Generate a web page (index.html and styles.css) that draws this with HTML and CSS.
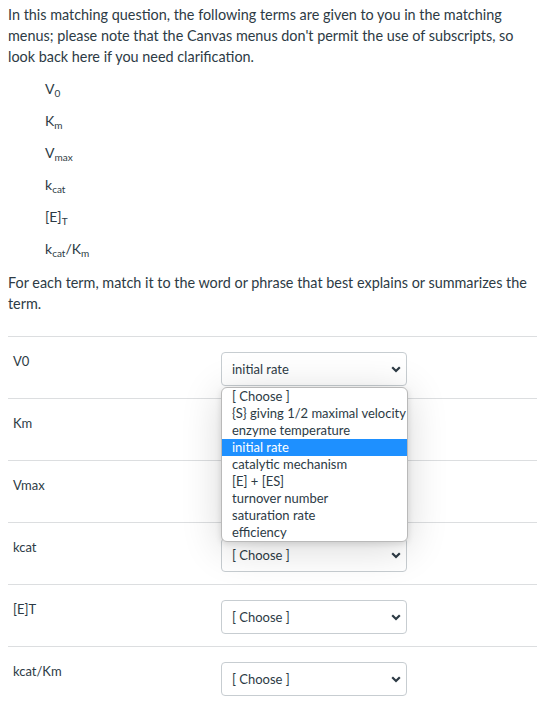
FILE: index.html
```html
<!DOCTYPE html>
<html lang="en">
<head>
<meta charset="utf-8">
<title>Matching question</title>
<link rel="stylesheet" href="styles.css">
</head>
<body>
<div class="page">
  <p class="intro">In this matching question, the following terms are given to you in the matching menus; please note that the Canvas menus don't permit the use of subscripts, so look back here if you need clarification.</p>
  <div class="terms">
    <p>V<sub>0</sub></p>
    <p>K<sub>m</sub></p>
    <p>V<sub>max</sub></p>
    <p>k<sub>cat</sub></p>
    <p>[E]<sub>T</sub></p>
    <p>k<sub>cat</sub>/K<sub>m</sub></p>
  </div>
  <p class="instr">For each term, match it to the word or phrase that best explains or summarizes the term.</p>

  <div class="answers">
    <div class="row">
      <div class="label">V0</div>
      <div class="field">
        <div class="select"><span>initial rate</span><svg class="chev" width="10" height="7" viewBox="0 0 10 7"><polyline points="1.2,1.2 5,5 8.8,1.2" fill="none" stroke="#2d3b45" stroke-width="2.2"/></svg></div>
        <div class="menu">
          <div class="opt">[ Choose ]</div>
          <div class="opt">{S} giving 1/2 maximal velocity</div>
          <div class="opt">enzyme temperature</div>
          <div class="opt active">initial rate</div>
          <div class="opt">catalytic mechanism</div>
          <div class="opt">[E] + [ES]</div>
          <div class="opt">turnover number</div>
          <div class="opt">saturation rate</div>
          <div class="opt">efficiency</div>
        </div>
      </div>
    </div>
    <div class="row">
      <div class="label">Km</div>
      <div class="field">
        <div class="select covered"><span>[ Choose ]</span><svg class="chev" width="10" height="7" viewBox="0 0 10 7"><polyline points="1.2,1.2 5,5 8.8,1.2" fill="none" stroke="#2d3b45" stroke-width="2.2"/></svg></div>
      </div>
    </div>
    <div class="row">
      <div class="label">Vmax</div>
      <div class="field">
        <div class="select covered"><span>[ Choose ]</span><svg class="chev" width="10" height="7" viewBox="0 0 10 7"><polyline points="1.2,1.2 5,5 8.8,1.2" fill="none" stroke="#2d3b45" stroke-width="2.2"/></svg></div>
      </div>
    </div>
    <div class="row">
      <div class="label">kcat</div>
      <div class="field">
        <div class="select"><span>[ Choose ]</span><svg class="chev" width="10" height="7" viewBox="0 0 10 7"><polyline points="1.2,1.2 5,5 8.8,1.2" fill="none" stroke="#2d3b45" stroke-width="2.2"/></svg></div>
      </div>
    </div>
    <div class="row">
      <div class="label">[E]T</div>
      <div class="field">
        <div class="select"><span>[ Choose ]</span><svg class="chev" width="10" height="7" viewBox="0 0 10 7"><polyline points="1.2,1.2 5,5 8.8,1.2" fill="none" stroke="#2d3b45" stroke-width="2.2"/></svg></div>
      </div>
    </div>
    <div class="row">
      <div class="label">kcat/Km</div>
      <div class="field">
        <div class="select"><span>[ Choose ]</span><svg class="chev" width="10" height="7" viewBox="0 0 10 7"><polyline points="1.2,1.2 5,5 8.8,1.2" fill="none" stroke="#2d3b45" stroke-width="2.2"/></svg></div>
      </div>
    </div>
  </div>
</div>
</body>
</html>
```

FILE: styles.css
```css
html, body {
  margin: 0;
  padding: 0;
  background: #ffffff;
}

body {
  font-family: Lato, "Open Sans", "Liberation Sans", sans-serif;
  color: #2d3b45;
}

.page {
  width: 529px;
  padding: 4px 0 0 8px;
}

.intro {
  margin: 0;
  font-size: 14.4px;
  line-height: 21px;
}

.terms {
  padding-left: 37px;
}

.terms p {
  margin: 12px 0 0;
  font-size: 14px;
  line-height: 20px;
}

.terms sub {
  font-size: 10px;
  line-height: 0;
  vertical-align: -3px;
}

.instr {
  margin: 13px 0 0;
  font-size: 14.4px;
  line-height: 21px;
}

.answers {
  margin-top: 22px;
}

.row {
  display: grid;
  grid-template-columns: 213px 186px;
  border-top: 1px solid #dcdee0;
  padding: 15px 0 12px;
}

.label {
  padding: 0 0 0 5px;
  margin-top: -1px;
  font-size: 13px;
  line-height: 20px;
}

.field {
  position: relative;
}

.select {
  box-sizing: border-box;
  height: 34px;
  border: 1px solid #c7cdd1;
  border-radius: 4px;
  background: #ffffff;
  display: flex;
  align-items: center;
  justify-content: space-between;
  padding: 0 5px 0 10px;
  font-size: 13px;
}

.select.covered {
  visibility: hidden;
}

.chev {
  display: block;
}

.menu {
  position: absolute;
  z-index: 5;
  top: 35px;
  left: 0;
  width: 187px;
  box-sizing: border-box;
  border: 1px solid #b9b9b9;
  border-radius: 6px;
  background: #ffffff;
  overflow: hidden;
  box-shadow: 0 6px 40px rgba(0, 0, 0, 0.16), 0 2px 6px rgba(0, 0, 0, 0.12);
}

.opt {
  height: 17px;
  line-height: 16px;
  padding-left: 10px;
  font-size: 13px;
  white-space: nowrap;
  color: #2d3b45;
}

.opt.active {
  background: #1e90ff;
  color: #ffffff;
}
```
